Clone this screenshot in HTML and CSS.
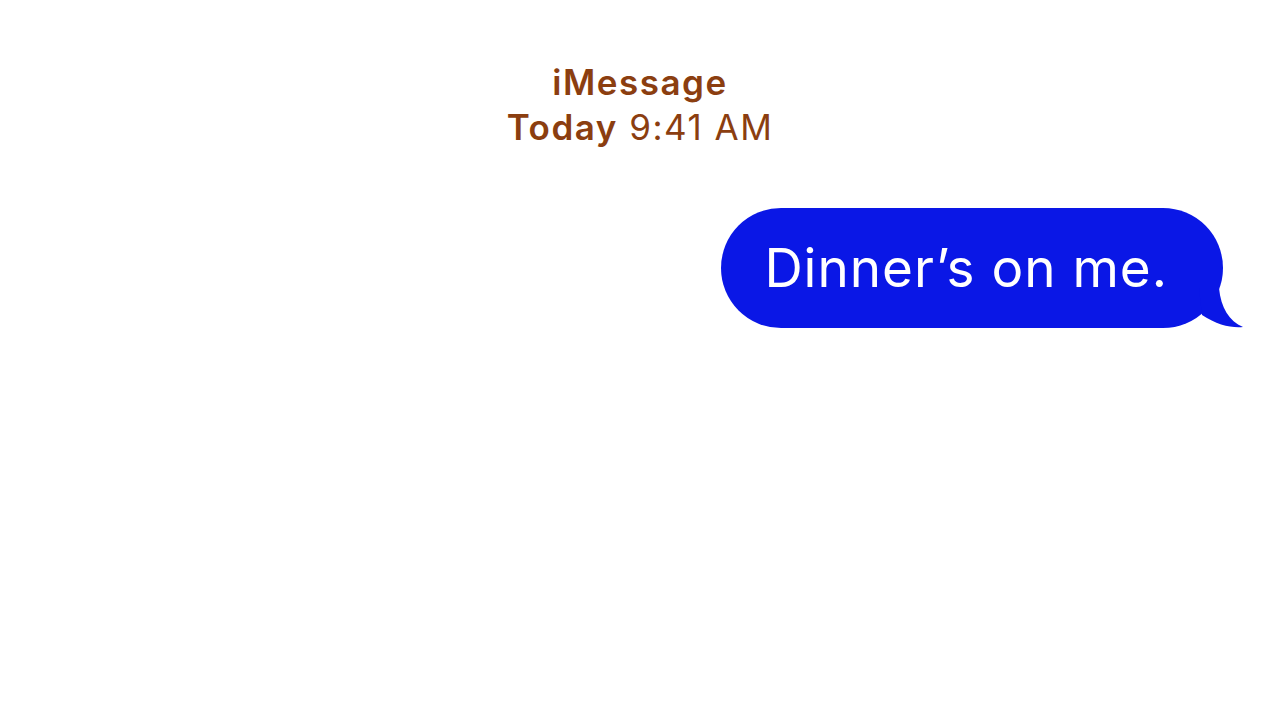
FILE: index.html
```html
<html>
    <head>
        <title>iMessage</title>
        <meta name="viewport" content="width=device-width" />
        <link rel="stylesheet" href="styles.css">
    </head>
    <body>
        <div class="thread">
            <div class="stamp">
                <div class="service">iMessage</div>
                <div class="time"><b>Today</b> 9:41 AM</div>
            </div>

            <div class="row">
                <div class="bubble">
                    Dinner’s on me.
                    <svg class="tail" width="44" height="40" viewBox="0 0 44 40">
                        <path d="M20 0 C22 20 30 33 44 39 C32 40 18 37 3 27 L0 0 Z" fill="#0a17e6"/>
                    </svg>
                </div>
            </div>
        </div>
    </body>
</html>
```

FILE: styles.css
```css
html, body {
    margin: 0;
    background: #fff;
}

body {
    font-family: Inter, "Liberation Sans", sans-serif;
}

.thread {
    display: flex;
    flex-direction: column;
    padding-top: 60px;
}

.stamp {
    text-align: center;
    color: #8b3e10;
    font-size: 35px;
    line-height: 45px;
    letter-spacing: 1.5px;
}

.service,
.stamp b {
    font-weight: 600;
}

.time {
    font-weight: 400;
}

.row {
    display: flex;
    justify-content: flex-end;
    padding: 58px 57px 0 0;
}

.bubble {
    position: relative;
    background: #0a17e6;
    color: #fff;
    font-size: 53px;
    letter-spacing: 1px;
    height: 120px;
    line-height: 120px;
    padding: 0 55px 0 43px;
    border-radius: 60px;
}

.tail {
    position: absolute;
    right: -20px;
    bottom: 0;
}
```
